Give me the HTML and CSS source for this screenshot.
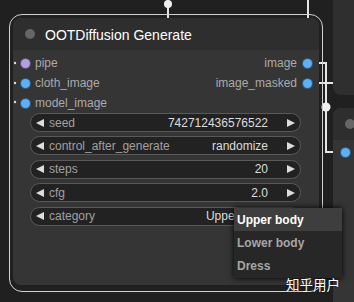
FILE: index.html
```html
<!DOCTYPE html>
<html>
<head>
<meta charset="utf-8">
<link rel="stylesheet" href="styles.css">
</head>
<body>
<div class="canvas">
  <svg class="links" width="354" height="302" viewBox="0 0 354 302">
    <g stroke="#e6e6e6" stroke-width="2" fill="none">
      <path d="M168 0 V22"/>
      <path d="M308 0 V22"/>
      <path d="M307 63 H326 V152 H345"/>
      <path d="M307 83 H340"/>
    </g>
    <circle cx="168" cy="4" r="4" fill="#eeeeee"/>
    <circle cx="326" cy="107" r="4.5" fill="#eeeeee"/>
  </svg>

  <div class="node node-top"></div>

  <div class="node node-right">
    <div class="title"><span class="box"></span></div>
    <div class="right-body">
      <span class="dot blue"></span>
    </div>
  </div>

  <div class="node main">
    <div class="outline"></div>
    <div class="title"><span class="box"></span><span class="title-text">OOTDiffusion Generate</span></div>
    <div class="slots">
      <div class="inputs">
        <div class="slot"><span class="dot pipe"></span><span>pipe</span></div>
        <div class="slot"><span class="dot blue"></span><span>cloth_image</span></div>
        <div class="slot"><span class="dot blue"></span><span>model_image</span></div>
      </div>
      <div class="outputs">
        <div class="slot"><span>image</span><span class="dot blue"></span></div>
        <div class="slot"><span>image_masked</span><span class="dot blue"></span></div>
      </div>
    </div>
    <div class="widgets">
      <div class="widget"><span class="arrow-l"></span><span class="label">seed</span><span class="value">742712436576522</span><span class="arrow-r"></span></div>
      <div class="widget"><span class="arrow-l"></span><span class="label">control_after_generate</span><span class="value">randomize</span><span class="arrow-r"></span></div>
      <div class="widget"><span class="arrow-l"></span><span class="label">steps</span><span class="value">20</span><span class="arrow-r"></span></div>
      <div class="widget"><span class="arrow-l"></span><span class="label">cfg</span><span class="value">2.0</span><span class="arrow-r"></span></div>
      <div class="widget"><span class="arrow-l"></span><span class="label">category</span><span class="value">Upper body</span><span class="arrow-r"></span></div>
    </div>
  </div>

  <svg class="stubs" width="354" height="302" viewBox="0 0 354 302">
    <g fill="#dddddd">
      <circle cx="15" cy="63" r="1.2"/>
      <circle cx="15" cy="83" r="1.2"/>
      <circle cx="15" cy="102" r="1.2"/>
    </g>
  </svg>

  <div class="menu">
    <div class="entry active">Upper body</div>
    <div class="entry">Lower body</div>
    <div class="entry">Dress</div>
  </div>

  <div class="watermark">知乎用户</div>
</div>
</body>
</html>
```

FILE: styles.css
```css
* {
  box-sizing: border-box;
  margin: 0;
  padding: 0;
}

html,
body {
  width: 354px;
  height: 302px;
  overflow: hidden;
  background: #202020;
}

body {
  font-family: "Liberation Sans", Arial, sans-serif;
}

.canvas {
  position: relative;
  width: 354px;
  height: 302px;
  overflow: hidden;
  background: #202020;
}

.links {
  position: absolute;
  left: 0;
  top: 0;
  z-index: 0;
}

.stubs {
  position: absolute;
  left: 0;
  top: 0;
  z-index: 3;
}

.node {
  position: absolute;
  background: #353535;
  z-index: 1;
}

.node-top {
  left: 333px;
  top: -10px;
  width: 40px;
  height: 105px;
  border-radius: 8px;
  background: #2f2f2f;
}

.node-right {
  left: 333px;
  top: 108px;
  width: 40px;
  height: 220px;
  border-radius: 8px 0 0 0;
}

.title {
  height: 32px;
  background: #2e2e2e;
  border-radius: 8px 8px 0 0;
  display: flex;
  align-items: center;
  padding-left: 12px;
}

.box {
  width: 10px;
  height: 10px;
  border-radius: 50%;
  background: #666;
  flex: none;
}

.right-body {
  padding: 8px 0 0 8px;
}

.main {
  left: 13px;
  top: 18px;
  width: 306px;
  height: 267px;
  border-radius: 8px;
  display: flex;
  flex-direction: column;
}

.outline {
  position: absolute;
  top: -3.75px;
  left: -3.75px;
  right: -3.75px;
  bottom: -6.75px;
  border: 1.5px solid #d2d2d2;
  border-radius: 13px;
}

.title-text {
  margin-left: 10px;
  font-size: 14px;
  color: #ffffff;
  padding-top: 1px;
}

.slots {
  display: flex;
  justify-content: space-between;
  padding-top: 3px;
}

.inputs,
.outputs {
  display: flex;
  flex-direction: column;
}

.slot {
  height: 20px;
  display: flex;
  align-items: center;
  font-size: 12px;
  color: #aaaaaa;
}

.inputs .slot {
  padding-left: 8px;
  gap: 5px;
}

.outputs .slot {
  padding-right: 7px;
  gap: 6px;
  justify-content: flex-end;
}

.dot {
  width: 9px;
  height: 9px;
  border-radius: 50%;
  flex: none;
  display: block;
}

.dot.blue {
  background: #5eb0f2;
  box-shadow: 0 0 0 1px #2f5c80;
}

.dot.pipe {
  background: #b3a0de;
  box-shadow: 0 0 0 1px #5e4d80;
}

.widgets {
  display: flex;
  flex-direction: column;
  gap: 4.4px;
  padding: 0 18px 0 17px;
}

.widget {
  height: 19px;
  border-radius: 10px;
  background: #222222;
  border: 1px solid #595959;
  display: flex;
  align-items: center;
  padding: 0 5px;
  font-size: 12px;
}

.arrow-l {
  width: 0;
  height: 0;
  border-top: 4.5px solid transparent;
  border-bottom: 4.5px solid transparent;
  border-right: 8px solid #dddddd;
  flex: none;
}

.arrow-r {
  width: 0;
  height: 0;
  border-top: 4.5px solid transparent;
  border-bottom: 4.5px solid transparent;
  border-left: 8px solid #dddddd;
  flex: none;
}

.label {
  margin-left: 5px;
  flex: 1;
  color: #a0a0a0;
  white-space: nowrap;
}

.value {
  margin-right: 19px;
  color: #dddddd;
  white-space: nowrap;
}

.menu {
  position: absolute;
  left: 234px;
  top: 208px;
  width: 108px;
  background: #272727;
  box-shadow: 0 0 6px #000;
  z-index: 4;
  display: flex;
  flex-direction: column;
}

.entry {
  height: 23.4px;
  display: flex;
  align-items: center;
  padding-left: 3px;
  font-size: 12px;
  font-weight: bold;
  color: #a6a6a6;
}

.entry.active {
  background: #3e3e3e;
  color: #ffffff;
}

.watermark {
  position: absolute;
  left: 286px;
  top: 275px;
  font-family: "Noto Sans CJK SC", sans-serif;
  font-size: 13.5px;
  line-height: 18px;
  color: #ffffff;
  z-index: 5;
  text-shadow: 0 0 2px rgba(0, 0, 0, 0.6);
}
```
